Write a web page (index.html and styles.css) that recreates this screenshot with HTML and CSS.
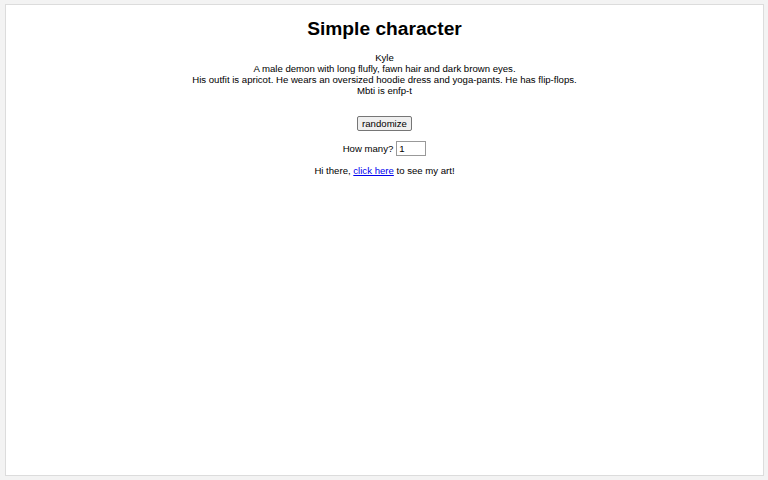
FILE: index.html
```html
<!DOCTYPE html>
<html lang="en">
<head>
    <meta charset="UTF-8">
    <title>Simple character</title>
    <link rel="stylesheet" href="styles.css">
</head>
<body>
    <div class="page">
        <h1>Simple character</h1>
        <div class="character">
            Kyle<br>
            A male demon with long flufly, fawn hair and dark brown eyes.<br>
            His outfit is apricot. He wears an oversized hoodie dress and yoga-pants. He has flip-flops.<br>
            Mbti is enfp-t
        </div>
        <button class="button">randomize</button>
        <div class="count">
            <label for="howMany">How many?</label>
            <input type="text" id="howMany" value="1">
        </div>
        <p class="note">Hi there, <a href="#">click here</a> to see my art!</p>
    </div>
</body>
</html>
```

FILE: styles.css
```css
* {
    box-sizing: border-box;
}

body {
    margin: 0;
    background: #f3f3f3;
    font-family: 'Liberation Sans', Arial, sans-serif;
    font-size: 9.6px;
    color: #000;
}

.page {
    margin: 4px 4px 4px 5px;
    height: 472px;
    background: #fff;
    border: 1px solid #dcdcdc;
    text-align: center;
    display: flex;
    flex-direction: column;
    align-items: center;
}

h1 {
    font-size: 19.2px;
    margin: 13px 0 12px;
}

.character {
    line-height: 11px;
}

.button {
    font-family: inherit;
    font-size: 9.6px;
    margin-top: 20px;
    padding: 1px 4px;
    background: #efefef;
    border: 1px solid #767676;
    border-radius: 2px;
}

.count {
    margin-top: 10px;
    display: flex;
    align-items: center;
    gap: 3px;
}

.count input {
    width: 30px;
    height: 15px;
    font-family: inherit;
    font-size: 9.6px;
    padding: 0 2px;
    border: 1px solid #999;
}

.note {
    margin: 9px 0 0;
}

.note a {
    color: #0000ee;
}
```
